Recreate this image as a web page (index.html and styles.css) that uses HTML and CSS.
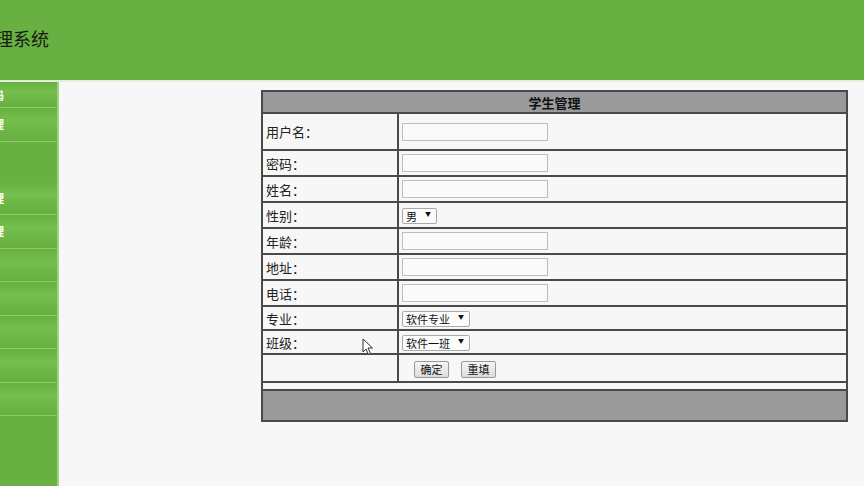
FILE: index.html
```html
<!DOCTYPE html>
<html lang="zh-CN">
  <head>
    <meta charset="UTF-8" />
    <title>学生管理系统</title>
    <link rel="stylesheet" href="styles.css">
  </head>
  <body>
    <div class="header">
      <h1 class="title">学生管理系统</h1>
    </div>

    <div class="layout">
      <div class="sidebar">
        <div class="menu-item first">修改密码</div>
        <div class="menu-item">用户管理</div>
        <div class="menu-gap"></div>
        <div class="menu-item">学生管理</div>
        <div class="menu-item">班级管理</div>
        <div class="menu-item"></div>
        <div class="menu-item"></div>
        <div class="menu-item"></div>
        <div class="menu-item"></div>
        <div class="menu-item"></div>
      </div>

      <div class="main">
        <table class="form-table">
          <tr class="row-head">
            <th colspan="2">学生管理</th>
          </tr>
          <tr class="row-tall">
            <td class="label">用户名：</td>
            <td><input type="text" class="field" /></td>
          </tr>
          <tr>
            <td class="label">密码：</td>
            <td><input type="password" class="field" /></td>
          </tr>
          <tr>
            <td class="label">姓名：</td>
            <td><input type="text" class="field" /></td>
          </tr>
          <tr>
            <td class="label">性别：</td>
            <td>
              <span class="select-box small">
                <select><option>男</option><option>女</option></select>
              </span>
            </td>
          </tr>
          <tr>
            <td class="label">年龄：</td>
            <td><input type="text" class="field" /></td>
          </tr>
          <tr>
            <td class="label">地址：</td>
            <td><input type="text" class="field" /></td>
          </tr>
          <tr>
            <td class="label">电话：</td>
            <td><input type="text" class="field" /></td>
          </tr>
          <tr class="row-short">
            <td class="label">专业：</td>
            <td>
              <span class="select-box">
                <select><option>软件专业</option></select>
              </span>
            </td>
          </tr>
          <tr class="row-short">
            <td class="label">班级：</td>
            <td>
              <span class="select-box">
                <select><option>软件一班</option></select>
              </span>
            </td>
          </tr>
          <tr class="row-buttons">
            <td></td>
            <td class="buttons">
              <button type="submit">确定</button>
              <button type="reset">重填</button>
            </td>
          </tr>
          <tr class="row-empty">
            <td colspan="2"></td>
          </tr>
          <tr class="row-foot">
            <td colspan="2"></td>
          </tr>
        </table>
      </div>
    </div>

    <!-- mouse pointer in the screenshot -->
    <svg class="cursor" width="12" height="18" viewBox="0 0 12 18">
      <path d="M1 1 L1 14 L4 11 L6.5 16.5 L8.5 15.5 L6 10 L10.5 10 Z" fill="#fff" stroke="#333" stroke-width="1" />
    </svg>
  </body>
</html>
```

FILE: styles.css
```css
body {
  margin: 0;
  background-color: #f7f7f7;
  font-family: "Noto Sans CJK SC", "DejaVu Sans", sans-serif;
  overflow: hidden;
}

.header {
  height: 80px;
  background-color: #69b042;
  border-bottom: 2px solid #e4eedc;
  display: flex;
  align-items: center;
}

.title {
  margin: 0 0 4px -59px;
  font-size: 18px;
  font-weight: normal;
  color: #141a10;
}

.layout {
  display: flex;
  height: 404px;
}

.sidebar {
  width: 57px;
  background-color: #69b042;
  border-right: 2px solid #9fd27f;
  flex-shrink: 0;
}

.menu-item {
  height: 32.5px;
  line-height: 32px;
  border-bottom: 1px solid #8ccb66;
  background: linear-gradient(to bottom, #67b040, #74bf4e 40%, #6cb646 70%, #66ae40);
  color: #fff;
  font-size: 11px;
  font-weight: bold;
  text-indent: -40px;
  white-space: nowrap;
}

.menu-item.first {
  height: 25px;
  line-height: 27px;
}

.menu-gap {
  height: 40px;
}

.main {
  flex: 1;
  padding: 8px 0 0 202px;
}

.form-table {
  width: 587px;
  border-collapse: collapse;
  border: 2px solid #555;
  font-size: 13px;
  color: #222;
}

.form-table th,
.form-table td {
  border: 2px solid #4a4a4a;
  padding: 0 3px;
  height: 24px;
}

.form-table th {
  background-color: #9a9a9a;
  height: 20px;
  font-size: 13px;
  font-weight: bold;
  color: #111;
}

.form-table .label {
  width: 128px;
}

.row-tall td {
  height: 35px;
}

.row-short td {
  height: 22px;
}

.row-buttons td {
  height: 26px;
}

.row-empty td {
  height: 6px;
  padding: 0;
}

.row-foot td {
  height: 29px;
  background-color: #9a9a9a;
}

.field {
  display: block;
  width: 146px;
  height: 18px;
  box-sizing: border-box;
  border: 1px solid #bdbdbd;
  background-color: #fafafa;
  padding: 0 2px;
}

.select-box {
  position: relative;
  display: inline-block;
  vertical-align: middle;
}

.select-box select {
  appearance: none;
  -webkit-appearance: none;
  height: 16px;
  width: 68px;
  border: 1px solid #aaa;
  border-radius: 2px;
  background-color: #fbfbfb;
  font-family: "Noto Sans CJK SC", sans-serif;
  font-size: 11px;
  line-height: 14px;
  padding: 0 0 0 3px;
  color: #111;
}

.select-box.small select {
  width: 35px;
}

.select-box::after {
  content: "▼";
  position: absolute;
  right: 6px;
  top: 3px;
  font-size: 6px;
  color: #111;
  pointer-events: none;
}

.buttons {
  padding-left: 15px !important;
}

.buttons button {
  height: 17px;
  width: 35px;
  margin-right: 9px;
  padding: 0;
  border: 1px solid #999;
  border-radius: 2px;
  background: linear-gradient(to bottom, #f6f6f6, #dcdcdc);
  font-family: "Noto Sans CJK SC", sans-serif;
  font-size: 11px;
  line-height: 15px;
  color: #111;
}

.cursor {
  position: absolute;
  left: 362px;
  top: 338px;
}
```
